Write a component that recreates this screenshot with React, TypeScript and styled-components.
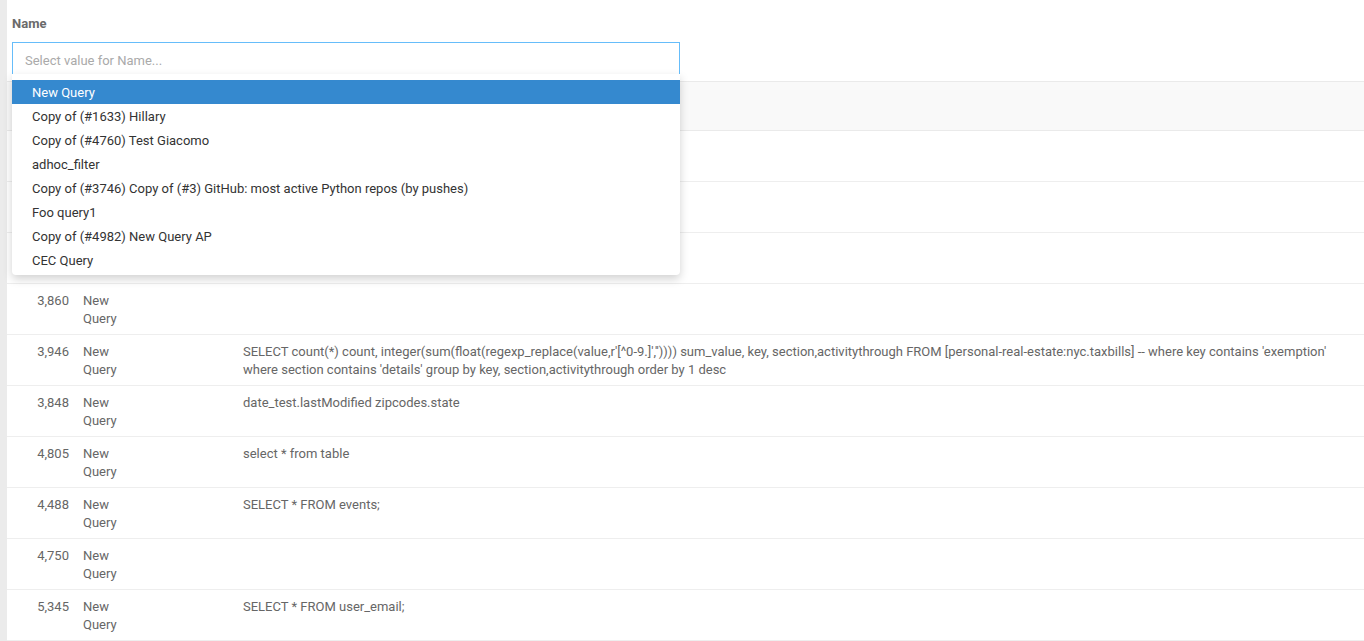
import styled, { createGlobalStyle } from 'styled-components';

const GlobalStyle = createGlobalStyle`
  html, body {
    margin: 0;
    padding: 0;
    background: #ffffff;
    font-family: Roboto, "Liberation Sans", Arial, sans-serif;
  }
  * {
    box-sizing: border-box;
  }
`;

const Page = styled.div`
  display: flex;
  min-height: 641px;
`;

const SideStrip = styled.div`
  width: 7px;
  flex-shrink: 0;
  background-color: #ebebeb;
`;

const Main = styled.div`
  flex: 1;
  min-width: 0;
`;

const FilterBar = styled.div`
  padding: 15px 5px 4px;
`;

const Label = styled.div`
  font-size: 13px;
  font-weight: 700;
  line-height: 18px;
  color: #6a6a6a;
  margin-bottom: 9px;
`;

const SelectWrap = styled.div`
  position: relative;
  width: 668px;
`;

const Input = styled.input`
  display: block;
  width: 100%;
  height: 35px;
  padding: 1px 12px 0;
  border: 1px solid #66bdfa;
  border-radius: 0;
  outline: none;
  font-family: inherit;
  font-size: 13px;
  color: #333;
  &::placeholder {
    color: #aaa;
  }
`;

const Menu = styled.ul`
  position: absolute;
  top: 32px;
  left: 0;
  right: 0;
  margin: 0;
  padding: 6px 0 3px;
  list-style: none;
  background: #fff;
  border-radius: 0 0 4px 4px;
  box-shadow: 0 4px 10px rgba(0, 0, 0, 0.18);
  z-index: 10;
`;

const MenuItem = styled.li<{ $active?: boolean }>`
  height: 24px;
  padding: 2px 20px 0;
  line-height: 22px;
  font-size: 13px;
  color: ${(p) => (p.$active ? '#fff' : '#333')};
  background-color: ${(p) => (p.$active ? '#3589cf' : 'transparent')};
  white-space: nowrap;
`;

const Table = styled.div`
  border-top: 1px solid #eaeaea;
`;

const HeaderRow = styled.div`
  height: 49px;
  background-color: #f9f9f9;
  border-bottom: 1px solid #eaeaea;
`;

const Row = styled.div`
  display: grid;
  grid-template-columns: 69px 160px 1fr;
  border-bottom: 1px solid #eeeeee;
  font-size: 13px;
  line-height: 18px;
  color: #666;
`;

const Cell = styled.div<{ $align?: 'left' | 'right' }>`
  padding: 8px 7px 6px;
  min-height: 50px;
  text-align: ${(p) => p.$align || 'left'};
`;

const NameText = styled.span`
  display: block;
  width: 50px;
`;

const options = [
  'New Query',
  'Copy of (#1633) Hillary',
  'Copy of (#4760) Test Giacomo',
  'adhoc_filter',
  'Copy of (#3746) Copy of (#3) GitHub: most active Python repos (by pushes)',
  'Foo query1',
  'Copy of (#4982) New Query AP',
  'CEC Query',
];

// the first rows sit under the open menu, so nothing of them shows
const rows = [
  { id: '', name: '', query: '' },
  { id: '', name: '', query: '' },
  { id: '', name: '', query: '' },
  { id: '3,860', name: 'New Query', query: '' },
  {
    id: '3,946',
    name: 'New Query',
    query:
      "SELECT count(*) count, integer(sum(float(regexp_replace(value,r'[^0-9.]','')))) sum_value, key, section,activitythrough FROM [personal-real-estate:nyc.taxbills] -- where key contains 'exemption' where section contains 'details' group by key, section,activitythrough order by 1 desc",
  },
  { id: '3,848', name: 'New Query', query: 'date_test.lastModified zipcodes.state' },
  { id: '4,805', name: 'New Query', query: 'select * from table' },
  { id: '4,488', name: 'New Query', query: 'SELECT * FROM events;' },
  { id: '4,750', name: 'New Query', query: '' },
  { id: '5,345', name: 'New Query', query: 'SELECT * FROM user_email;' },
];

const App = () => {
  return (
    <>
      <GlobalStyle />
      <Page>
        <SideStrip />
        <Main>
          <FilterBar>
            <Label>Name</Label>
            <SelectWrap>
              <Input placeholder="Select value for Name..." />
              <Menu>
                {options.map((o, i) => (
                  <MenuItem key={o} $active={i === 0}>
                    {o}
                  </MenuItem>
                ))}
              </Menu>
            </SelectWrap>
          </FilterBar>
          <Table>
            <HeaderRow />
            {rows.map((r, i) => (
              <Row key={i}>
                <Cell $align="right">{r.id}</Cell>
                <Cell>
                  <NameText>{r.name}</NameText>
                </Cell>
                <Cell>{r.query}</Cell>
              </Row>
            ))}
          </Table>
        </Main>
      </Page>
    </>
  );
};

export default App;
